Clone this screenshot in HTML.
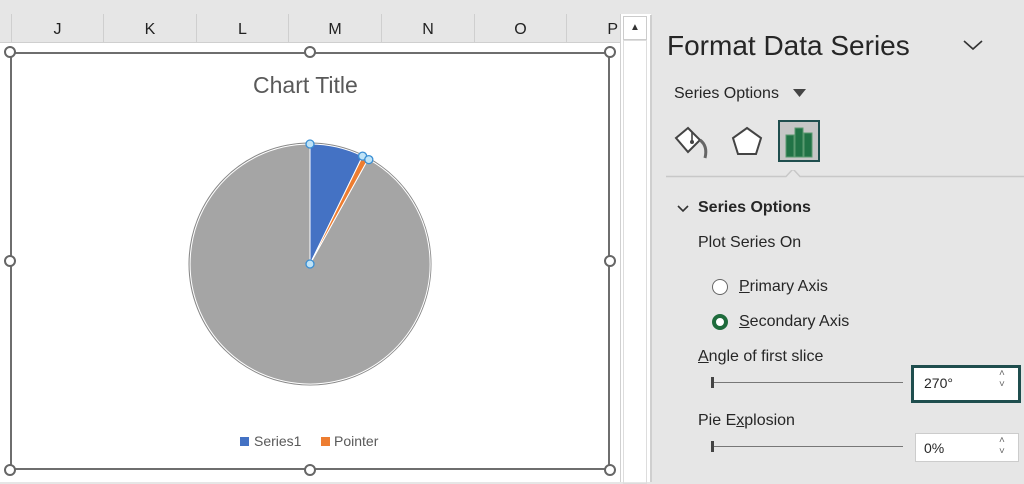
<!DOCTYPE html>
<html><head><meta charset="utf-8"><style>
body{margin:0;width:1024px;height:482px;overflow:hidden;background:#e6e6e6;font-family:"Liberation Sans",sans-serif;position:relative}
.a{position:absolute}
.col{position:absolute;top:14px;height:28px;font-size:16px;color:#222;text-align:center;line-height:32px;border-right:1px solid #cfcfcf;box-sizing:border-box}
.t{position:absolute;color:#262626;white-space:nowrap}
.h{width:12px;height:12px;border:2px solid #666;border-radius:50%;background:#fff;position:absolute;box-sizing:border-box}
</style></head><body>
<div class="a" style="left:0;top:14px;width:620px;height:28px;background:#e6e6e6;border-bottom:1px solid #cfcfcf"></div>
<div class="col" style="left:0;width:12px"></div>
<div class="col" style="left:12px;width:92px">J</div>
<div class="col" style="left:104px;width:93px">K</div>
<div class="col" style="left:197px;width:92px">L</div>
<div class="col" style="left:289px;width:93px">M</div>
<div class="col" style="left:382px;width:93px">N</div>
<div class="col" style="left:475px;width:92px">O</div>
<div class="col" style="left:567px;width:53px;text-align:right;padding-right:2px;border:none">P</div>
<div class="a" style="left:0;top:43px;width:620px;height:439px;background:#fff"></div>
<div class="a" style="left:10px;top:52px;width:600px;height:418px;border:2px solid #6e6e6e;box-sizing:border-box;background:#fff"></div>
<div class="a" style="left:620px;top:14px;width:30px;height:468px;background:#fff;border-left:1px solid #d0d0d0"></div>
<div class="a" style="left:623px;top:16px;width:22px;height:22px;border:1px solid #ccc;background:#fff;font-size:10px;text-align:center;line-height:22px;color:#333">▲</div>
<div class="a" style="left:623px;top:40px;width:22px;height:442px;border:1px solid #ddd"></div>
<div class="a" style="left:650px;top:15px;width:2px;height:467px;background:#cfcfcf"></div>
<div class="h" style="left:4px;top:46px"></div><div class="h" style="left:304px;top:46px"></div><div class="h" style="left:604px;top:46px"></div>
<div class="h" style="left:4px;top:255px"></div><div class="h" style="left:604px;top:255px"></div>
<div class="h" style="left:4px;top:464px"></div><div class="h" style="left:304px;top:464px"></div><div class="h" style="left:604px;top:464px"></div>
<div class="t" style="left:253px;top:72px;font-size:23px;color:#595959">Chart Title</div>
<svg class="a" style="left:0;top:0" width="620" height="482">
<circle cx="310" cy="264" r="121" fill="#a6a6a6" stroke="#888" stroke-width="1"/>
<path d="M310,264 L368.2,159 A120,120 0 1 1 310,144 Z" fill="#a5a5a5" stroke="#fff" stroke-width="1"/>
<path d="M310,264 L310,144 A120,120 0 0 1 362.6,156.1 Z" fill="#4472c4" stroke="#fff" stroke-width="1"/>
<path d="M310,264 L362.6,156.1 A120,120 0 0 1 368.2,159 Z" fill="#ed7d31" stroke="#fff" stroke-width="1"/>
<g fill="#bfe3f7" stroke="#3a8fd4" stroke-width="1.3"><circle cx="310" cy="144" r="4"/><circle cx="362.6" cy="156.1" r="4"/><circle cx="368.8" cy="159.6" r="4"/><circle cx="310" cy="264" r="4"/></g>
<rect x="240" y="437" width="9" height="9" fill="#4472c4"/><text x="254" y="446" font-size="14" fill="#595959" font-family="Liberation Sans">Series1</text>
<rect x="321" y="437" width="9" height="9" fill="#ed7d31"/><text x="334" y="446" font-size="14" fill="#595959" font-family="Liberation Sans">Pointer</text>
</svg>
<div class="t" style="left:667px;top:30px;font-size:28px">Format Data Series</div>
<svg class="a" style="left:962px;top:38px" width="22" height="14"><path d="M2,3 L11,11 L20,3" fill="none" stroke="#333" stroke-width="1.6"/></svg>
<div class="t" style="left:674px;top:85px;font-size:16px">Series Options</div>
<svg class="a" style="left:793px;top:89px" width="14" height="10"><path d="M0,0 L13,0 L6.5,8 Z" fill="#444"/></svg>
<svg class="a" style="left:672px;top:124px" width="40" height="40"><path d="M4,14 L16,4 L28,16 L16,28 Z" fill="#fff" stroke="#444" stroke-width="2"/><path d="M16,4 L20,8 L20,17" fill="none" stroke="#444" stroke-width="1.6"/><circle cx="20" cy="18" r="2" fill="#444"/><path d="M28,16 Q36,22 33,34" fill="none" stroke="#666" stroke-width="3"/></svg>
<svg class="a" style="left:728px;top:124px" width="40" height="40"><path d="M19,4 L33,14 L28,30 L10,30 L5,14 Z" fill="#fff" stroke="#444" stroke-width="2"/></svg>
<div class="a" style="left:778px;top:120px;width:42px;height:42px;background:#c6c6c6;border:2px solid #1f4e4e;box-sizing:border-box"></div>
<svg class="a" style="left:780px;top:122px" width="40" height="40"><g fill="#217346" stroke="#5a9a70" stroke-width="1"><rect x="6" y="13" width="8" height="22"/><rect x="15" y="6" width="8" height="29"/><rect x="24" y="11" width="8" height="24"/></g></svg>
<svg class="a" style="left:666px;top:170px" width="358" height="12"><path d="M0,6.5 L120,6.5 L127,-1 L134,6.5 L358,6.5" fill="none" stroke="#c8c8c8" stroke-width="1.5"/></svg>
<svg class="a" style="left:677px;top:204px" width="14" height="10"><path d="M1,2 L6,7 L11,2" fill="none" stroke="#333" stroke-width="1.6"/></svg>
<div class="t" style="left:698px;top:199px;font-size:16px;font-weight:bold">Series Options</div>
<div class="t" style="left:698px;top:234px;font-size:16px">Plot Series On</div>
<div class="a" style="left:712px;top:279px;width:16px;height:16px;border:1.5px solid #666;border-radius:50%;background:#fff;box-sizing:border-box"></div>
<div class="t" style="left:739px;top:278px;font-size:16px"><u>P</u>rimary Axis</div>
<div class="a" style="left:712px;top:314px;width:16px;height:16px;border:4px solid #1e6b3c;border-radius:50%;background:#fff;box-sizing:border-box"></div>
<div class="t" style="left:739px;top:313px;font-size:16px"><u>S</u>econdary Axis</div>
<div class="t" style="left:698px;top:348px;font-size:16px"><u>A</u>ngle of first slice</div>
<div class="a" style="left:712px;top:382px;width:191px;height:1px;background:#777"></div>
<div class="a" style="left:711px;top:377px;width:3px;height:11px;background:#444"></div>
<div class="a" style="left:911px;top:365px;width:110px;height:38px;border:3px solid #1f4e4e;box-sizing:border-box;background:#fff;outline:1px solid #fff;outline-offset:-5px"></div>
<div class="t" style="left:924px;top:375px;font-size:14px">270°</div>
<div class="t" style="left:999px;top:368px;font-size:10px;color:#666;line-height:11px">˄<br>˅</div>
<div class="t" style="left:698px;top:412px;font-size:16px">Pie E<u>x</u>plosion</div>
<div class="a" style="left:712px;top:446px;width:191px;height:1px;background:#777"></div>
<div class="a" style="left:711px;top:441px;width:3px;height:11px;background:#444"></div>
<div class="a" style="left:915px;top:433px;width:104px;height:29px;border:1px solid #ccc;box-sizing:border-box;background:#fff"></div>
<div class="t" style="left:924px;top:440px;font-size:14px">0%</div>
<div class="t" style="left:999px;top:435px;font-size:10px;color:#666;line-height:11px">˄<br>˅</div>
</body></html>
